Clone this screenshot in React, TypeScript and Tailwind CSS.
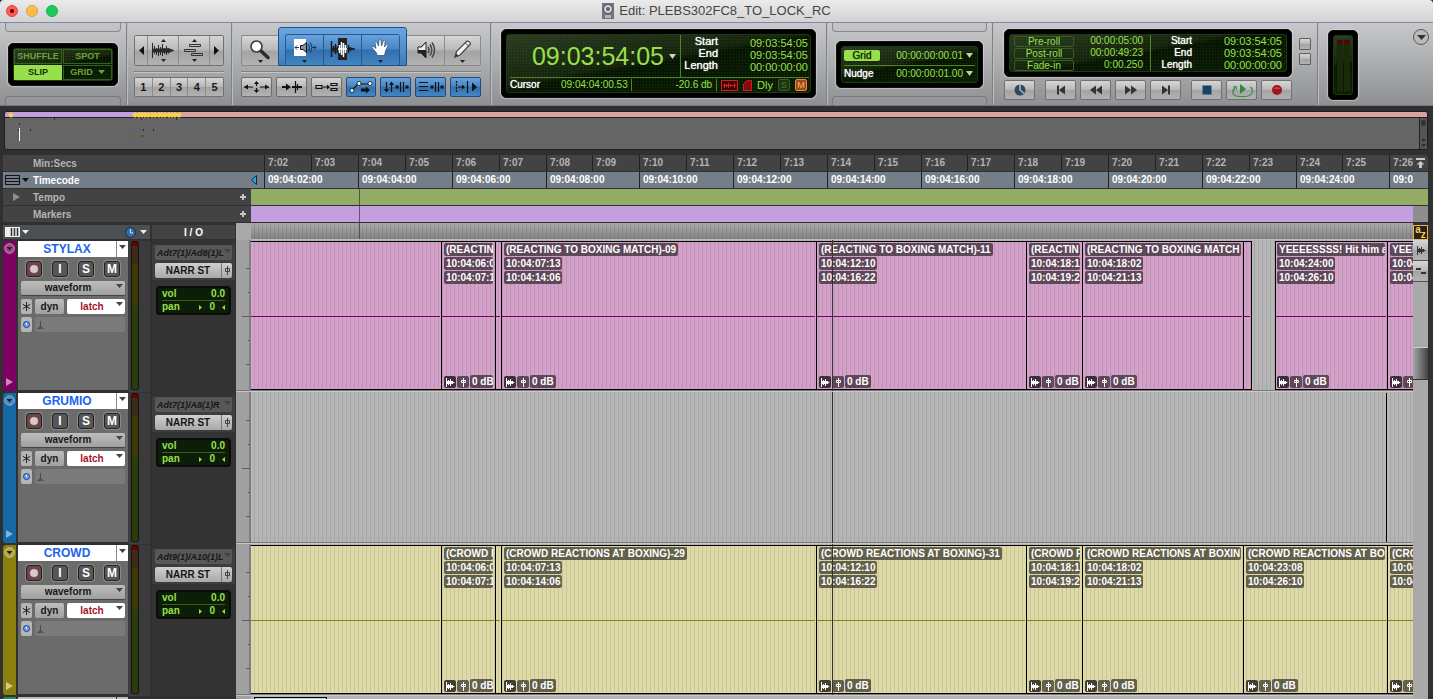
import React from "react";

type Tone = "pink" | "olive" | "teal";

type Clip = {
  width: string;
  tone?: Tone;
  name?: string;
  start?: string;
  end?: string;
  opens?: boolean;
};

type Track = {
  name: string;
  input: string;
  strip: string;
  mark: string;
  line: string;
  clips: Clip[];
};

const toneClass: Record<Tone, string> = {
  pink: "bg-[#d4a2c9]",
  olive: "bg-[#dedaa8]",
  teal: "bg-[#a5d6c9]",
};

const stripes =
  "bg-fixed bg-[repeating-linear-gradient(90deg,transparent_0px,transparent_2px,rgba(0,0,0,0.09)_2px,rgba(0,0,0,0.09)_3px,transparent_3px,transparent_4px)]";

const tracks: Track[] = [
  {
    name: "STYLAX",
    input: "Adt7(1)/Ad8(1)L",
    strip: "bg-[#7d0063]",
    mark: "#c58fb8",
    line: "bg-[#7d0063]",
    clips: [
      { width: "w-[191px]", tone: "pink" },
      { width: "w-[54px]", tone: "pink", name: "(REACTIN", start: "10:04:06:0", end: "10:04:07:1" },
      { width: "w-[6px]", tone: "pink" },
      { width: "w-[315px]", tone: "pink", name: "(REACTING TO BOXING MATCH)-09", start: "10:04:07:13", end: "10:04:14:06" },
      { width: "w-[210px]", tone: "pink", name: "(REACTING TO BOXING MATCH)-11", start: "10:04:12:10", end: "10:04:16:22" },
      { width: "w-[56px]", tone: "pink", name: "(REACTIN", start: "10:04:18:1", end: "10:04:19:2" },
      { width: "w-[161px]", tone: "pink", name: "(REACTING TO BOXING MATCH", start: "10:04:18:02", end: "10:04:21:13" },
      { width: "w-[8px]", tone: "pink" },
      { width: "w-[23px]" },
      { width: "w-[113px]", tone: "pink", name: "YEEEESSSS! Hit him a", start: "10:04:24:00", end: "10:04:26:10", opens: true },
      { width: "w-[60px]", tone: "pink", name: "YEEE", start: "10:04", end: "10:04" },
    ],
  },
  {
    name: "GRUMIO",
    input: "Adt7(1)/A8(1)R",
    strip: "bg-[#1668a5]",
    mark: "#7db4dc",
    line: "bg-transparent",
    clips: [],
  },
  {
    name: "CROWD",
    input: "Adt9(1)/A10(1)L",
    strip: "bg-[#8a8010]",
    mark: "#d2cb80",
    line: "bg-[#8a8010]",
    clips: [
      { width: "w-[191px]", tone: "olive" },
      { width: "w-[54px]", tone: "olive", name: "(CROWD R", start: "10:04:06:0", end: "10:04:07:1" },
      { width: "w-[6px]", tone: "olive" },
      { width: "w-[315px]", tone: "olive", name: "(CROWD REACTIONS AT BOXING)-29", start: "10:04:07:13", end: "10:04:14:06" },
      { width: "w-[210px]", tone: "olive", name: "(CROWD REACTIONS AT BOXING)-31", start: "10:04:12:10", end: "10:04:16:22" },
      { width: "w-[56px]", tone: "olive", name: "(CROWD R", start: "10:04:18:1", end: "10:04:19:2" },
      { width: "w-[161px]", tone: "olive", name: "(CROWD REACTIONS AT BOXIN", start: "10:04:18:02", end: "10:04:21:13" },
      { width: "w-[144px]", tone: "olive", name: "(CROWD REACTIONS AT BO", start: "10:04:23:08", end: "10:04:26:10" },
      { width: "w-[60px]", tone: "olive", name: "(CRO", start: "10:04", end: "10:04" },
    ],
  },
];

const seconds = Array.from({ length: 25 }, (_, i) => `7:${String(i + 2).padStart(2, "0")}`);
const frames = [
  ...Array.from({ length: 12 }, (_, i) => `09:04:${String(i * 2 + 2).padStart(2, "0")}:00`),
  "09:0",
];
const markerXs = [6, 130, 134, 137, 140, 143, 147, 150, 154, 157, 160, 164, 167, 170, 174];

function Down({ className = "", color = "#444", w = 7, h = 4 }: { className?: string; color?: string; w?: number; h?: number }) {
  return (
    <svg className={`shrink-0 ${className}`} width={w} height={h} viewBox="0 0 8 5" preserveAspectRatio="none" aria-hidden="true">
      <path d="M0 0h8L4 5z" fill={color} />
    </svg>
  );
}

function WaveGlyph() {
  return (
    <svg width="23" height="17" viewBox="0 0 23 17" aria-hidden="true" className="shrink-0" stroke="#2a2a2a" fill="#2a2a2a">
      <path d="M.5 1v15M2.500 4v8M4.500 6v7M6.500 3v11M8.500 5v8M10.500 2v12M12.500 6v6M14.500 4v9M16.500 6.500v5" />
      <path d="M1 7l16-.5 5 2-5 2L1 10z" strokeWidth=".5" />
    </svg>
  );
}

function MiniWave({ color }: { color: string }) {
  return (
    <svg width="10" height="9" viewBox="0 0 10 9" aria-hidden="true" className="shrink-0" stroke={color} fill={color}>
      <path d="M1.500 0v9M3.500 2v5M5.500 1v7M7.500 3v3" />
      <path d="M1 3h5l4 1.500L6 6H1z" stroke="none" />
    </svg>
  );
}

function Lcd({ className = "", children }: { className?: string; children: React.ReactNode }) {
  return (
    <div className="rounded-[5px] border border-[#111] bg-black p-1 shadow-[0_0_1px_1px_rgba(225,225,225,0.5)]">
      <div
        className={`h-full rounded-[3px] border border-[#1d3b12] bg-[radial-gradient(rgba(80,140,40,0.22)_0.5px,transparent_1px),linear-gradient(170deg,#2b3b22_0%,#16240e_45%,#071403_50%,#0a1e04_100%)] bg-[size:3px_3px,100%_100%] ${className}`}
      >
        {children}
      </div>
    </div>
  );
}

function Cluster({ className = "", children }: { className?: string; children: React.ReactNode }) {
  return (
    <section className={`flex shrink-0 border-r border-[#808185] shadow-[1px_0_0_#bcbdbf] ${className}`}>{children}</section>
  );
}

function Notched({ children }: { children: React.ReactNode }) {
  return (
    <div className="flex w-full flex-col items-center justify-between px-[5px]">
      <div className="h-[9px] w-full rounded-b border border-t-0 border-[#88898c] bg-[#c0c1c3]/40" />
      {children}
      <div className="h-[9px] w-full rounded-t border border-b-0 border-[#77787b] bg-[#a0a1a3]/30" />
    </div>
  );
}

const metal = "bg-[linear-gradient(#d6d6d7_0%,#b8b8b9_49%,#a3a3a4_51%,#b2b2b3_100%)]";
const blue = "bg-[linear-gradient(#67a2dc_0%,#4a87c6_45%,#326fae_52%,#4387c2_100%)]";

function SmallTool({ label, active, children }: { label: string; active?: boolean; children: React.ReactNode }) {
  return (
    <button
      aria-label={label}
      className={`flex h-[20px] w-[31px] items-center justify-center rounded-[2px] border ${active ? `border-[#1e4c80] ${blue}` : `border-[#6c6d6f] ${metal}`}`}
    >
      <svg width="27" height="14" viewBox="0 0 27 14" aria-hidden="true" fill="none" stroke="#111" strokeWidth="1.200">
        {children}
      </svg>
    </button>
  );
}

function Transport({ label, children }: { label: string; children: React.ReactNode }) {
  return (
    <button aria-label={label} className={`flex h-[20px] w-[31px] items-center justify-center rounded-[2px] border border-[#707173] ${metal}`}>
      <svg width="24" height="16" viewBox="0 0 24 16" fill="#333" aria-hidden="true">
        {children}
      </svg>
    </button>
  );
}

function ToolButton({ label, active, arrow, className = "", children }: { label: string; active?: boolean; arrow?: boolean; className?: string; children: React.ReactNode }) {
  return (
    <button
      aria-label={label}
      className={`flex flex-col items-center justify-between pt-[3px] pb-[2px] ${active ? `border-[#28588f] ${blue}` : `border-[#8a8b8d] ${metal}`} ${className}`}
    >
      {children}
      {arrow ? <Down color="#222" w={5} h={3} /> : <span />}
    </button>
  );
}

const groove = "my-[4px] mt-[5px] border-t border-b border-t-[#808184] border-b-[#c4c5c6]";

function Toolbar() {
  const modeButton = "flex h-[15px] items-center justify-center border border-[#35611f] text-[9px] leading-none font-bold text-[#6ea335]";
  return (
    <div className="flex h-[84px] shrink-0 border-t border-b border-t-[#8688a3] border-b-[#77788c] bg-[linear-gradient(#c7c8ca,#8f9092)]">
      <Cluster className="w-[127px]">
        <Notched>
          <Lcd>
            <div className="grid grid-cols-[48px_49px] gap-px">
              <button className={modeButton}>SHUFFLE</button>
              <button className={modeButton}>SPOT</button>
              <button className="flex h-[15px] items-center justify-center bg-[#98e04b] text-[9px] leading-none font-bold text-[#16300a]">SLIP</button>
              <button className={`gap-[5px] ${modeButton}`}>
                GRID <Down color="#6ea335" />
              </button>
            </div>
          </Lcd>
        </Notched>
      </Cluster>

      <Cluster className="w-[105px] flex-col px-[7px] pt-[12px]">
        <div className="flex h-[31px] overflow-hidden rounded-[2px] border border-[#707173] text-[#2a2a2a]">
          <button aria-label="Zoom out" className={`flex w-[13px] items-center justify-center border-r border-[#8a8b8d] ${metal}`}>
            <svg width="5" height="9" viewBox="0 0 5 9"><path d="M5 0v9L0 4.500z" fill="#111" /></svg>
          </button>
          <button aria-label="Waveform zoom" className={`flex flex-1 flex-col items-center justify-between border-r border-[#8a8b8d] py-[3px] ${metal}`}>
            <Down className="rotate-180" color="#222" w={5} h={3} />
            <WaveGlyph />
            <Down color="#222" w={5} h={3} />
          </button>
          <button aria-label="Track zoom" className={`flex flex-1 flex-col items-center justify-between border-r border-[#8a8b8d] py-[3px] ${metal}`}>
            <Down className="rotate-180" color="#222" w={5} h={3} />
            <svg width="20" height="13" viewBox="0 0 20 13" fill="none" stroke="#333">
              <path d="M5.500.5h11v2h-11zM.5 5.500h11v2h-11zM7.500 9.500h11v2h-11z" />
            </svg>
            <Down color="#222" w={5} h={3} />
          </button>
          <button aria-label="Zoom in" className={`flex w-[13px] items-center justify-center ${metal}`}>
            <svg width="5" height="9" viewBox="0 0 5 9"><path d="M0 0v9l5-4.500z" fill="#111" /></svg>
          </button>
        </div>
        <div className={groove} />
        <div className="flex h-[20px] overflow-hidden rounded-[2px] border border-[#707173]">
          {["1", "2", "3", "4", "5"].map((n) => (
            <button key={n} className={`flex-1 border-r border-[#8a8b8d] text-[11px] leading-none font-bold text-[#1a1a1a] last:border-r-0 ${metal}`}>
              {n}
            </button>
          ))}
        </div>
      </Cluster>

      <Cluster className="w-[259px] flex-col px-[9px] pt-[4px]">
        <div className="flex h-[39px] items-end">
          <ToolButton label="Zoomer" arrow className="h-[31px] w-[37px] rounded-l-[2px] border border-r-0">
            <svg width="22" height="21" viewBox="0 0 22 21">
              <path d="M12 12l7 6.500" stroke="#2a2a2a" strokeWidth="3.500" strokeLinecap="round" />
              <circle cx="7.500" cy="7.500" r="5.500" fill="#fff" stroke="#3a3a3a" strokeWidth="1.600" />
            </svg>
          </ToolButton>
          <div className="flex h-[39px] w-[129px] items-end rounded-t-[3px] border border-[#1e4f8c] bg-[linear-gradient(#6aa6e2,#3f7cbb)] px-[6px]">
            <div className="flex h-[31px] w-full overflow-hidden rounded-t-[3px] border-t border-l border-[#28588f]">
              <ToolButton label="Trim" active arrow className="flex-1 border-r">
                <svg width="24" height="19" viewBox="0 0 24 19" fill="none" stroke="#163556">
                  <path d="M1 1h12v17H1z" fill="#fff" stroke="none" />
                  <path d="M2 9.500h4M4 7.500l-2 2 2 2M19 9.500h4M21 7.500l2 2-2 2" />
                  <path d="M7.500 7.500h2.500l3.500-3v10l-3.500-3H7.500z" fill="#8a93a0" stroke="#111" />
                  <path d="M15.500 6q2 3.500 0 7M17.500 4.500q3 5 0 10" />
                </svg>
              </ToolButton>
              <ToolButton label="Selector" active className="flex-1 border-r">
                <svg width="26" height="22" viewBox="0 0 26 22" fill="none">
                  <path d="M8 0h9v22H8z" fill="#222" />
                  <path d="M1.500 3v16M3.500 8v6M5.500 6v10M7.500 8v7M18.500 7v8M20.500 9v4M22.500 10v2M1 11h24" stroke="#1a1a1a" strokeWidth="1.500" />
                  <path d="M9.500 7v8M11.500 4v13M13.500 5v14M15.500 7v8M8 11h9" stroke="#fff" strokeWidth="1.500" />
                </svg>
              </ToolButton>
              <ToolButton label="Grabber" active arrow className="flex-1 border-r">
                <svg width="19" height="19" viewBox="0 0 19 19">
                  <path
                    d="M6 17.500L5.500 15 1 9.500q-.5-1.500 1-1.500l3 2.500L4 4q.5-1.500 1.800 0L7.500 8 8 2q1-1.500 2 0l.5 6 2-5.500q1.300-1 1.700.5L13.500 9l2.500-3q1.500-.5 1.200 1L14.500 13l-1 4.500z"
                    fill="#fff"
                    stroke="#2a4a6c"
                    strokeWidth=".7"
                  />
                </svg>
              </ToolButton>
            </div>
          </div>
          <ToolButton label="Scrubber" className="h-[31px] w-[38px] border-y border-r">
            <svg width="20" height="22" viewBox="0 0 20 22" fill="none" stroke="#444" strokeWidth="1.500">
              <path d="M2 8h3l5-5v16l-5-5H2z" fill="#222" stroke="#222" strokeWidth="1" />
              <path d="M2.500 11V8.500h3L9.500 4v7z" fill="#eee" stroke="none" />
              <path d="M12 8q2 3 0 6M14 5.500q3.500 5.500 0 11M16 3.500q5 7.500 0 15" />
            </svg>
          </ToolButton>
          <ToolButton label="Pencil" arrow className="h-[31px] w-[36px] rounded-r-[2px] border-y border-r">
            <svg width="19" height="20" viewBox="0 0 19 20">
              <path d="M2 18l1.500-5.500L14 2q3 0 3.500 3L7 16z" fill="#f2f2f2" stroke="#444" strokeWidth="1.200" />
              <path d="M2 18l1-3.500L5 17zM12.500 4l3 3" fill="#222" stroke="#444" />
            </svg>
          </ToolButton>
        </div>
        <div className={groove} />
        <div className="flex gap-[4px]">
          <SmallTool label="Zoom toggle">
            <path d="M1 7h9M17 7h9M13.500 2v4M13.500 8v4" />
            <path d="M1 7l4-2.500v5zM26 7l-4-2.500v5zM13.500 1l-2.500 3h5zM13.500 13l-2.500-3h5z" fill="#111" stroke="none" />
          </SmallTool>
          <SmallTool label="Tab to transients">
            <path d="M4 7h5M14 7h10" strokeWidth="2" />
            <path d="M8 3.500L13 7l-5 3.500z" fill="#111" stroke="none" />
            <path d="M17.500 1v12M19.500 4v6" />
          </SmallTool>
          <SmallTool label="Mirrored editing">
            <path d="M3 5.500h6v3H3zM10 7h5M18 3.500h6v2h-6zM18 8.500h6v2h-6z" />
            <path d="M14 4.500L17 7l-3 2.500z" fill="#111" stroke="none" />
          </SmallTool>
          <SmallTool label="Automation follows edit" active>
            <path d="M4 10l6-6h12" />
            <g fill="#fff" strokeWidth=".8"><circle cx="4" cy="10.500" r="2" /><circle cx="11" cy="3.500" r="2" /><circle cx="22" cy="3.500" r="2" /></g>
            <path d="M13 8.500h5V6.500l4 3.500-4 3.500v-2h-5z" fill="#111" stroke="none" />
          </SmallTool>
          <SmallTool label="Link timeline and edit" active>
            <path d="M4.500 2v8M9.500 4v8M18.500 2v10M21.500 2v10" />
            <path d="M2 9h5L4.500 12.500zM7 5h5L9.500 1.500zM13.500 5.500h3v3h-3zM23.500 5.500h3v3h-3z" fill="#111" stroke="none" />
          </SmallTool>
          <SmallTool label="Link track and edit" active>
            <path d="M2 2.500h9M2 6.500h9M2 10.500h9M18.500 2v10M21.500 2v10" />
            <path d="M13.500 5.500h3v3h-3zM23.500 5.500h3v3h-3z" fill="#111" stroke="none" />
          </SmallTool>
          <SmallTool label="Insertion follows playback" active>
            <path d="M4.500 1v12" strokeDasharray="2 1" />
            <path d="M6 7h6M15.500 1v12" />
            <path d="M10 4.500L13 7l-3 2.500zM20 2.500l5 4.500-5 4.500z" fill="#111" stroke="none" />
          </SmallTool>
        </div>
      </Cluster>

      <Cluster className="w-[336px] px-[10px] pt-[6px] pb-[7px] [&>div]:w-full">
        <Lcd className="flex flex-col pr-px pl-[3px] text-[11px] leading-[12px] text-[#98e04b]">
          <div className="flex flex-1">
            <div className="flex flex-1 items-center justify-end gap-[5px] border-r border-[#4d8426] pr-[4px] text-[25px]">
              09:03:54:05 <Down color="#c9d6c0" w={7} h={5} />
            </div>
            <div className="flex w-[37px] flex-col items-end text-white [text-shadow:0_0_1px_white]">
              <span>Start</span>
              <span>End</span>
              <span>Length</span>
            </div>
            <div className="flex w-[91px] flex-col items-end pt-[2px] pr-[1px]">
              <span>09:03:54:05</span>
              <span>09:03:54:05</span>
              <span>00:00:00:00</span>
            </div>
          </div>
          <div className="flex h-[15px] items-center border-t border-[#4d8426] pr-[2px] text-[10px]">
            <span className="w-[51px] text-white [text-shadow:0_0_1px_white]">Cursor</span>
            <span className="w-[71px] border-r border-[#4d8426]">09:04:04:00.53</span>
            <span className="flex-1 pr-[4px] text-right">-20.6 db</span>
            <span className="flex items-center gap-[5px] border-l border-[#4d8426] pl-[4px]">
              <svg width="17" height="11" viewBox="0 0 17 11" fill="#3a0505" stroke="#d8201a">
                <path d="M.5.5h16v10H.5zM3.500 3v5M5.500 4v3M7.500 3v5M9.500 4v3M13.500 3v5M2 5.500h13" />
              </svg>
              <svg width="9" height="11" viewBox="0 0 9 11"><path d="M.5 10.500V4l3.500-3.500h4.500v10z" fill="#7a0e10" stroke="#e01420" /></svg>
              <span className="text-[11px]">Dly</span>
              <span className="flex h-[12px] w-[12px] items-center justify-center rounded-[2px] border border-[#3a5a26] bg-[#1e3312] text-[9px] text-[#4c7330]">S</span>
              <span className="flex h-[12px] w-[12px] items-center justify-center rounded-[2px] border border-[#f0883a] bg-[#9a4a14] text-[9px] text-[#ffb070]">M</span>
            </span>
          </div>
        </Lcd>
      </Cluster>

      <Cluster className="w-[166px] [&>div>div:nth-child(2)]:w-[147px]">
        <Notched>
          <Lcd className="flex flex-col px-[2px] pt-px text-[10px] leading-[16px] text-[#98e04b]">
            <div className="flex items-center border-b border-[#4d8426] pb-px">
              <span className="w-[36px] rounded-[2px] bg-[#98e04b] text-center leading-[11px] text-[#16300a] [text-shadow:0_0_1px_#16300a]">Grid</span>
              <span className="flex-1 pr-[3px] text-right">00:00:00:00.01</span>
              <Down color="#b9d3a4" w={7} h={5} className="mr-[2px]" />
            </div>
            <div className="flex items-center">
              <span className="text-white [text-shadow:0_0_1px_white]">Nudge</span>
              <span className="flex-1 pr-[3px] text-right">00:00:00:01.00</span>
              <Down color="#b9d3a4" w={7} h={5} className="mr-[2px]" />
            </div>
          </Lcd>
        </Notched>
      </Cluster>

      <Cluster className="w-[325px] flex-col justify-between pt-[6px] pr-[5px] pb-[5px] pl-[11px]">
        <div className="flex h-[47px] gap-[7px]">
          <div className="grid w-[288px] shrink-0">
            <Lcd className="flex px-[4px] text-[10px] leading-[12px] text-[#98e04b]">
              <div className="flex flex-col justify-around">
                {["Pre-roll", "Post-roll", "Fade-in"].map((t) => (
                  <button key={t} className="h-[11px] w-[60px] rounded-[2px] border border-[#35611f] leading-[9px]">
                    {t}
                  </button>
                ))}
              </div>
              <div className="flex w-[77px] flex-col items-end border-r border-[#4d8426] pr-[7px]">
                <span>00:00:05:00</span>
                <span>00:00:49:23</span>
                <span>0:00.250</span>
              </div>
              <div className="flex w-[41px] flex-col items-end text-white [text-shadow:0_0_1px_white]">
                <span>Start</span>
                <span>End</span>
                <span>Length</span>
              </div>
              <div className="flex flex-1 flex-col items-end text-[11px]">
                <span>09:03:54:05</span>
                <span>09:03:54:05</span>
                <span>00:00:00:00</span>
              </div>
            </Lcd>
          </div>
          <div className="flex flex-col gap-[3px] pt-[9px]">
            <button aria-label="Pre-roll toggle" className={`h-[12px] w-[12px] rounded-[1px] border border-[#5e5f61] ${metal}`} />
            <button aria-label="Post-roll toggle" className={`h-[12px] w-[12px] rounded-[1px] border border-[#5e5f61] ${metal}`} />
          </div>
        </div>
        <div className="flex gap-[4px]">
          <div className="mr-[6px]">
            <Transport label="Online">
              <circle cx="12" cy="8" r="5.500" fill="#2d4a60" />
              <path d="M12 2v6l4 3.500" stroke="#b5b5b6" strokeWidth="1.500" fill="none" />
            </Transport>
          </div>
          <Transport label="Return to zero"><path d="M8 3.500h2v9H8zM16 3.500v9L10 8z" /></Transport>
          <Transport label="Rewind"><path d="M12 3.500v9L6 8zM18 3.500v9L12 8z" /></Transport>
          <Transport label="Fast forward"><path d="M6 3.500v9L12 8zM12 3.500v9L18 8z" /></Transport>
          <div className="mr-[6px]">
            <Transport label="Go to end"><path d="M8 3.500v9L14 8zM14 3.500h2v9h-2z" /></Transport>
          </div>
          <Transport label="Stop"><path d="M7.500 3.500h9v9h-9z" fill="#174368" /></Transport>
          <Transport label="Play">
            <path d="M4 6.500q-4 7 5 8h7q8-1 6-8l-1.500-1.500M3 9.500l2-4M3 5l3-.5.5 3" fill="none" stroke="#3f8a45" strokeWidth="1.200" />
            <path d="M10 2l6 5-6 5z" fill="#2f8a35" />
          </Transport>
          <Transport label="Record"><circle cx="12" cy="8" r="5" fill="#a3141c" /><path d="M8.500 7a4 4 0 017 0z" fill="#c0454c" /></Transport>
        </div>
      </Cluster>

      <section className="flex flex-1 items-start justify-between pt-[7px] pr-[4px] pl-[10px]">
        <div className="grid h-[70px] w-[30px]">
          <Lcd className="flex justify-center gap-px pt-[4px] pb-[3px]">
            <span className="w-[6px] border-t-4 border-t-[#4a0806] bg-[#182a08]" />
            <span className="w-[6px] border-t-4 border-t-[#4a0806] bg-[#182a08]" />
          </Lcd>
        </div>
        <button aria-label="Toolbar menu" className="-mt-px flex h-[16px] w-[16px] items-center justify-center rounded-full border border-[#57585a] bg-[#b9babc]">
          <Down color="#333" w={9} h={5} />
        </button>
      </section>
    </div>
  );
}

function Overview() {
  return (
    <div className="mt-[5px] mr-[5px] ml-[4px] flex h-[39px] shrink-0 flex-col overflow-hidden rounded-[3px] border border-[#1d1d1d] bg-[#656565]">
      <div className="relative flex h-[6px] shrink-0 border-b border-[#222]">
        <div className="w-[174px] bg-[#c49fe0]" />
        <div className="flex-1 bg-[#d9a39f]" />
        <svg className="absolute top-0 left-0" width="190" height="6" viewBox="0 0 190 6" aria-hidden="true">
          <path d="M132 1h42" stroke="#6fc3b4" strokeDasharray="2 3" />
          {markerXs.map((x) => (
            <path key={x} d={`M${x - 3} 3l3-3 3 3-3 3z`} fill="#ffcf3d" />
          ))}
        </svg>
      </div>
      <div className="flex flex-1 justify-between">
        <svg width="190" height="31" viewBox="0 0 190 31" aria-hidden="true">
          <path d="M49 1h1M136 1h1M171 1h1M14 6h1" stroke="#242a66" strokeWidth="2" />
          <path d="M13 12h1M25 12h1M138 12h1M148 12h1" stroke="#5a0c46" strokeWidth="2" />
          <path d="M12 18h2M130 18h1M136 18h3" stroke="#5e5a1c" strokeWidth="2" />
          <path d="M14.500 10v13" stroke="#fff" />
        </svg>
        <div className="flex w-[8px] flex-col items-center justify-between border-l border-[#222] bg-[#555] pt-[2px] pb-[2px]">
          <span className="h-[6px] w-[5px] rounded-full bg-[#333]" />
          <svg width="5" height="9" viewBox="0 0 5 9"><path d="M0 3h5L2.500 0zM0 6h5L2.500 9z" fill="#2d2d2d" /></svg>
        </div>
      </div>
    </div>
  );
}

function RulerHead({ label, active, lead, tail }: { label: string; active?: boolean; lead?: React.ReactNode; tail?: React.ReactNode }) {
  return (
    <div className={`flex w-[248px] shrink-0 items-center pr-[5px] text-[10px] font-bold ${active ? "bg-[#747e88] text-white" : "bg-[#434343] text-[#b4b4b4]"}`}>
      <div className="flex w-[30px] items-center gap-[2px] pl-[2px]">{lead}</div>
      <span className="flex-1">{label}</span>
      {tail}
    </div>
  );
}

function Rulers() {
  const row = "flex h-[16px] pl-[3px]";
  const plus = (
    <svg width="6" height="6" viewBox="0 0 6 6" aria-hidden="true"><path d="M3 0v6M0 3h6" stroke="#c4c4c4" strokeWidth="2" /></svg>
  );
  return (
    <div className="mt-[5px] flex shrink-0 flex-col gap-px overflow-hidden pr-[5px]">
      <div className={row}>
        <RulerHead label="Min:Secs" />
        <div className="flex min-w-0 flex-1 overflow-hidden bg-[#434343] pl-[13px] text-[10px] leading-[15px] font-bold text-[#b4b4b4]">
          {seconds.map((s, i) => (
            <span key={s} className={`shrink-0 border-l border-[#222] pl-[3px] ${i === 24 ? "w-[24px]" : i % 8 === 6 ? "w-[46px]" : "w-[47px]"}`}>
              {s}
            </span>
          ))}
        </div>
        <button aria-label="Scroll to top" className="flex w-[15px] items-center justify-center rounded-tr-[3px] bg-[#434343]">
          <svg width="9" height="10" viewBox="0 0 9 10" fill="#c8c8c8"><path d="M0 0h9v2H0zM4.500 3L8.500 6.500H6V10H3V6.500H.5z" /></svg>
        </button>
      </div>
      <div className={row}>
        <RulerHead
          label="Timecode"
          active
          lead={
            <>
              <svg width="15" height="10" viewBox="0 0 15 10" fill="none" stroke="#111"><path d="M.5.5h14v9H.5zM.5 3.500h14M.5 6.500h14" /></svg>
              <Down color="#111" w={7} h={4} />
            </>
          }
        />
        <div className="flex min-w-0 flex-1 overflow-hidden bg-[#747e88] text-[10px] leading-[16px] font-bold text-white">
          <svg className="mt-[3px] mr-[7px] shrink-0" width="6" height="10" viewBox="0 0 6 10"><path d="M5.500.5v9L.5 5z" fill="#2aa8e8" stroke="#0b2c44" /></svg>
          {frames.map((f, i) => (
            <span key={f} className={`shrink-0 border-l border-[#222] pl-[3px] ${i === 12 ? "w-[24px]" : i % 4 === 3 ? "w-[93px]" : "w-[94px]"}`}>
              {f}
            </span>
          ))}
        </div>
        <div className="w-[15px] bg-[#747e88]" />
      </div>
      <div className={row}>
        <RulerHead
          label="Tempo"
          lead={<svg className="ml-[8px]" width="7" height="8" viewBox="0 0 7 8"><path d="M0 0v8l7-4z" fill="#8e8e8e" /></svg>}
          tail={plus}
        />
        <div className="flex-1 bg-[#95ac68]"><div className="h-full w-[109px] border-r border-[#4d5a35]" /></div>
      </div>
      <div className={row}>
        <RulerHead label="Markers" tail={plus} />
        <div className="flex-1 bg-[#c49fe0]"><div className="h-full w-[109px] border-r border-[#655274]" /></div>
        <div className="w-[15px] bg-[#8e8e8e]" />
      </div>
    </div>
  );
}

function ColumnHeads() {
  return (
    <div className="flex h-[18px] shrink-0 pr-[5px] pl-[3px]">
      <div className="mt-[3px] flex h-[14px] w-[147px] items-center bg-[#4c5054] px-[2px]">
        <svg width="15" height="10" viewBox="0 0 15 10"><path d="M0 0h15v10H0z" fill="#eee" /><path d="M6.500 1v8M9.500 1v8M12.500 1v8" stroke="#333" strokeWidth="1.500" /></svg>
        <Down className="ml-[2px]" color="#eee" w={7} h={4} />
        <svg className="ml-auto" width="11" height="11" viewBox="0 0 11 11"><circle cx="5.500" cy="5.500" r="5" fill="#3569a8" stroke="#1b2c48" /><path d="M5.500 2v4h2.500" stroke="#dfe8f5" fill="none" /></svg>
        <Down className="mr-[1px] ml-[4px]" color="#eee" w={7} h={4} />
      </div>
      <div className="mt-[3px] ml-[2px] flex h-[14px] w-[83px] items-center justify-center bg-[#434343] text-[10px] font-bold text-white">I / O</div>
      <div className="mt-px ml-[1px] w-[15px] bg-[#a9a9a9]" />
      <div className="mt-px flex-1 border-b border-[#bbb] bg-[linear-gradient(#a9a9ab,#838385)]">
        <div className={`h-full ${stripes}`}>
          <div className="h-full w-[109px] border-r border-[#555]" />
        </div>
      </div>
      <button aria-label="Sort tracks" className="mt-[3px] flex h-[15px] w-[15px] items-center justify-center border border-[#f0b43a] bg-[#222] text-[10px] font-bold text-[#ffc94a]">
        <span className="-mt-[6px] leading-none">a</span>
        <span className="mt-[4px] leading-none">z</span>
      </button>
    </div>
  );
}

function TrackControls({ track }: { track: Track }) {
  const pick = "w-full appearance-none rounded-[2px] text-[10px] leading-[14px] [text-align-last:center]";
  const square = "flex h-[16px] w-[16px] items-center justify-center rounded-[3px] border border-[#222] text-[12px] leading-none font-bold text-white shadow-[0_0_0_1px_#8a8a8a]";
  return (
    <>
      <div className={`mt-px flex h-[150px] w-[13px] flex-col items-center justify-between rounded-l-[3px] pt-[2px] pb-[5px] ${track.strip}`}>
        <svg width="11" height="11" viewBox="0 0 11 11"><circle cx="5.500" cy="5.500" r="4.800" fill={track.mark} fillOpacity=".5" stroke={track.mark} /><path d="M2.500 4h6L5.500 7.500z" fill="#222" /></svg>
        <svg width="7" height="8" viewBox="0 0 7 8"><path d="M0 0v8l7-4z" fill={track.mark} /></svg>
      </div>
      <div className="mt-px ml-[2px] flex h-[149px] w-[110px] flex-col bg-[#6b6b6b]">
        <div className="flex h-[16px] bg-white">
          <button className="flex-1 border-r border-[#888] text-[12px] leading-[16px] font-bold text-[#1a64f0]">{track.name}</button>
          <button aria-label={`${track.name} menu`} className="flex w-[11px] justify-center pt-[4px]"><Down color="#444" /></button>
        </div>
        <div className="mt-[4px] flex gap-[10px] pl-[8px]">
          <button aria-label="Record enable" className={`bg-[#6a4446] ${square}`}><span className="h-[8px] w-[8px] rounded-full bg-[#d8c8c8]" /></button>
          <button className={`bg-[#565656] ${square}`}>I</button>
          <button className={`bg-[#565656] ${square}`}>S</button>
          <button className={`bg-[#565656] ${square}`}>M</button>
        </div>
        <div className="mt-[4px] flex flex-col gap-[3px] px-[3px]">
          <div className="relative flex">
            <select aria-label="Track view" className={`h-[15px] border-b border-[#444] bg-[linear-gradient(#bdbdbd,#a0a0a0)] pr-[10px] font-bold text-[#161616] ${pick}`}>
              <option>waveform</option>
            </select>
            <Down className="absolute top-[3px] right-[2px]" />
          </div>
          <div className="flex gap-[3px]">
            <button aria-label="Freeze" className="flex h-[15px] w-[11px] items-center justify-center rounded-[2px] bg-[#b5b5b5]">
              <svg width="9" height="9" viewBox="0 0 9 9"><path d="M4.500 0v9M.8 2.300l7.400 4.400M.8 6.700l7.400-4.400" stroke="#222" /></svg>
            </button>
            <button className="h-[15px] w-[29px] rounded-[2px] bg-[linear-gradient(#bdbdbd,#a0a0a0)] text-[10px] leading-[14px] font-bold text-[#161616]">dyn</button>
            <div className="relative flex flex-1">
              <select aria-label="Automation mode" className={`h-[15px] bg-white pr-[8px] font-bold text-[#a8102c] ${pick}`}>
                <option>latch</option>
              </select>
              <Down className="absolute top-[3px] right-[2px]" />
            </div>
          </div>
          <div className="flex gap-[3px]">
            <button aria-label="Timebase" className="flex h-[15px] w-[11px] items-center justify-center rounded-[2px] bg-[#b5b5b5]">
              <svg width="7" height="7" viewBox="0 0 7 7"><circle cx="3.500" cy="3.500" r="3" fill="#6f9cf5" stroke="#1d3c8c" /><path d="M3.500 1.500v2.500" stroke="#fff" strokeWidth=".8" /></svg>
            </button>
            <div className="flex h-[15px] flex-1 items-center rounded-[2px] bg-[#7a7a7a] pl-[2px]">
              <svg width="7" height="8" viewBox="0 0 7 8"><path d="M3 0h1v5l3 3H0l3-3z" fill="#4e4e4e" /></svg>
            </div>
          </div>
        </div>
      </div>
      <div className="mt-px flex w-[22px] flex-col bg-[#3b3b3b] pl-[3px]">
        <div className="h-[149px] w-[8px] rounded-[2px] border border-[#141414] bg-[linear-gradient(#6a0000_0,#6a0000_4px,#3c2a18_4px,#3c2a18_21px,#3e3808_22px,#3e3808_60px,#2b3c08_66px)]" />
      </div>
      <div className="ml-[2px] flex h-[151px] w-[83px] flex-col bg-[#333] pt-[5px]">
        <div className="flex flex-col gap-[3px] bg-[#3d3d3d] px-[3px] pb-[2px]">
          <div className="relative flex">
            <select aria-label="Input path" className="h-[15px] w-full appearance-none rounded-[2px] bg-[#585858] pl-[2px] text-[9px] leading-[14px] font-bold text-[#161616] italic">
              <option>{track.input}</option>
            </select>
            <Down className="absolute top-[4px] right-[1px]" color="#444" />
          </div>
          <div className="flex h-[15px] overflow-hidden rounded-[2px] bg-[linear-gradient(#cfcfcf,#a9a9a9)]">
            <button className="flex-1 text-[10px] leading-[15px] font-bold text-[#161616]">NARR ST</button>
            <button aria-label="Output window" className="flex w-[11px] items-center justify-center border-l border-[#777]">
              <svg width="5" height="9" viewBox="0 0 5 9"><path d="M2.500 0v9M.5 2.500h4v3h-4z" stroke="#444" fill="#bbb" /></svg>
            </button>
          </div>
        </div>
        <div className="mt-[6px] ml-[4px] w-[75px] rounded-[4px] border-2 border-[#0b0b0b] bg-[#0c1e08] px-[4px] text-[10px] leading-[12px] font-bold text-[#98e04b]">
          <div className="flex justify-between border-b border-[#35611f]"><span>vol</span><span>0.0</span></div>
          <div className="flex items-center gap-[7px]">
            <span className="flex-1">pan</span>
            <svg width="3" height="5" viewBox="0 0 3 5"><path d="M0 0v5l3-2.500z" fill="#98e04b" /></svg>
            <span>0</span>
            <svg width="3" height="5" viewBox="0 0 3 5"><path d="M3 0v5L0 2.500z" fill="#98e04b" /></svg>
          </div>
        </div>
      </div>
      <svg className="ml-px shrink-0" width="15" height="152" viewBox="0 0 15 152" aria-hidden="true">
        <path d="M0 0h15v152H0z" fill="#a0a0a0" />
        <path d="M13 0h2v152h-2z" fill="#7f7f7f" />
        <path d="M10 28.500h4M12 52.500h2M6 76.500h8M12 100.500h2M10 124.500h4" stroke="#5a5a5a" />
        <path d="M0 150.500h15" stroke="#777" />
        <path d="M0 151.500h15" stroke="#c4c4c4" />
      </svg>
    </>
  );
}

function ClipBox({ clip, line }: { clip: Clip; line: string }) {
  if (!clip.tone) return <div className={`shrink-0 ${clip.width}`} />;
  const tag = "max-w-full overflow-hidden rounded-[2px] bg-black/55 px-[2px] text-[10px] leading-[13px] font-bold whitespace-nowrap text-white";
  return (
    <div className={`h-[149px] shrink-0 border-y border-r border-black ${clip.opens ? "border-l" : ""} ${clip.width} ${toneClass[clip.tone]}`}>
      <div className={`relative flex h-full flex-col justify-between py-px pr-[2px] ${clip.opens ? "pl-px" : "pl-[2px]"} ${stripes}`}>
        <div className={`absolute top-[74px] right-px left-0 h-px ${line}`} />
        {clip.name ? (
          <>
            <div className="flex min-w-0 flex-col items-start gap-px">
              <span className={tag}>{clip.name}</span>
              <span className={tag}>{clip.start}</span>
              <span className={tag}>{clip.end}</span>
            </div>
            <div className="flex min-w-0 items-end gap-px overflow-hidden text-white">
              <span className="flex h-[12px] w-[12px] shrink-0 items-center justify-center rounded-[2px] bg-black/70"><MiniWave color="#fff" /></span>
              <span className="flex h-[12px] w-[12px] shrink-0 items-center justify-center rounded-[2px] bg-black/55">
                <svg width="5" height="9" viewBox="0 0 5 9"><path d="M2.500 0v9M.5 2.500h4v2h-4z" stroke="#fff" fill="#555" /></svg>
              </span>
              <span className={tag}>0 dB</span>
            </div>
          </>
        ) : null}
      </div>
    </div>
  );
}

function TrackRow({ track }: { track: Track }) {
  return (
    <div className="flex h-[152px] shrink-0 pl-[3px]">
      <TrackControls track={track} />
      <div className="relative min-w-0 flex-1 overflow-hidden border-b border-[#c9c9c9] bg-[#b6b6b6]">
        <div className={`flex h-full border-b border-[#7a7a7a] pt-px ${stripes}`}>
          {track.clips.map((c, i) => (
            <ClipBox key={i} clip={c} line={track.line} />
          ))}
          {track.clips.length === 0 ? <div className="w-[1136px] shrink-0 border-r border-black" /> : null}
        </div>
        <div className="absolute inset-y-0 left-[581px] w-px bg-[#333]" />
      </div>
    </div>
  );
}

export default function App() {
  return (
    <div className="flex h-screen min-w-0 flex-col overflow-hidden bg-[#303030] [font-family:'Liberation_Sans',Arial,sans-serif]">
      <header className="flex h-[22px] shrink-0 items-center rounded-t-[4px] bg-[linear-gradient(#ebebeb,#d2d2d2)] px-[6px]">
        <div className="flex flex-1 gap-[8px]">
          <button aria-label="Close" className="flex h-[12px] w-[12px] items-center justify-center rounded-full border border-[#e0443e] bg-[#fc5b57]"><span className="h-[4px] w-[4px] rounded-full bg-[#5a0500]" /></button>
          <button aria-label="Minimize" className="h-[12px] w-[12px] rounded-full border border-[#e0a03a] bg-[#fdbc4e]" />
          <button aria-label="Full screen" className="h-[12px] w-[12px] rounded-full border border-[#1cad4a] bg-[#1fc95b]" />
        </div>
        <h1 className="flex items-center gap-[5px] text-[13px] text-[#444]">
          <svg width="12" height="16" viewBox="0 0 12 16"><path d="M0 0h12v16H0z" fill="#77747c" /><circle cx="6" cy="6" r="4.500" fill="#d8d4de" stroke="#4c4852" /><circle cx="6" cy="6" r="2" fill="#655c74" /><path d="M3 12h6v3H3z" fill="#b7b3bd" /></svg>
          Edit: PLEBS302FC8_TO_LOCK_RC
        </h1>
        <div className="flex-1" />
      </header>
      <Toolbar />
      <Overview />
      <Rulers />
      <ColumnHeads />
      <div className="flex min-h-0 flex-1 pr-[5px]">
        <div className="flex min-w-0 flex-1 flex-col overflow-hidden">
          {tracks.map((t) => (
            <TrackRow key={t.name} track={t} />
          ))}
          <div className="flex h-[3px] shrink-0 pl-[3px]">
            <div className="mt-px w-[13px] rounded-tl-[3px] bg-[#1f8a63]" />
            <div className="mt-px ml-[2px] w-[98px] bg-[#bdbdbd]" />
            <div className="mt-px ml-px w-[11px] bg-[#bdbdbd]" />
            <div className="ml-[108px] w-[15px] bg-[#a0a0a0]" />
            <div className="flex-1 bg-[#b4b4b4] pt-px pl-[3px]">
              <div className="h-[2px] w-[73px] border border-b-0 border-black bg-[#a5d6c9]" />
            </div>
          </div>
        </div>
        <div className="flex w-[15px] shrink-0 flex-col bg-[#a9a9a9]">
          <button aria-label="Waveform zoom" className={`flex h-[21px] items-center justify-center border-b border-[#555] ${metal}`}><MiniWave color="#333" /></button>
          <button aria-label="MIDI zoom" className={`flex h-[21px] items-center justify-center border-b border-[#555] ${metal}`}>
            <svg width="10" height="6" viewBox="0 0 10 6"><path d="M0 1h5M5 5h5" stroke="#333" strokeWidth="2" /></svg>
          </button>
          <div className="mt-[65px] h-[33px] border-t border-b border-t-[#ccc] border-b-[#333] bg-[linear-gradient(90deg,#a5a5a5,#444)]" />
        </div>
      </div>
    </div>
  );
}
